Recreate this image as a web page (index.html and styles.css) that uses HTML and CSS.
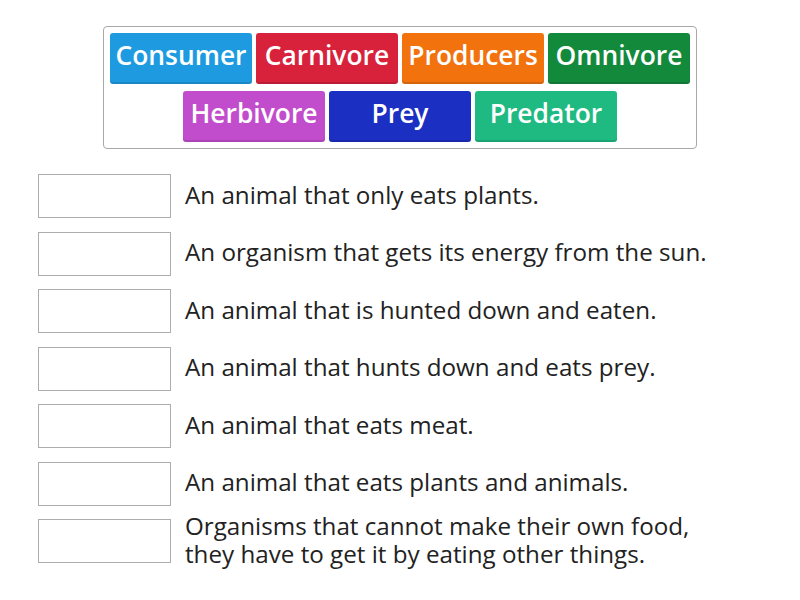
FILE: index.html
```html
<!DOCTYPE html>
<html>
<head>
<meta charset="utf-8">
<link rel="stylesheet" href="styles.css">
</head>
<body>
<div class="page">
  <div class="bank">
    <div class="bank-row">
      <div class="tile consumer">Consumer</div>
      <div class="tile carnivore">Carnivore</div>
      <div class="tile producers">Producers</div>
      <div class="tile omnivore">Omnivore</div>
    </div>
    <div class="bank-row">
      <div class="tile herbivore">Herbivore</div>
      <div class="tile prey">Prey</div>
      <div class="tile predator">Predator</div>
    </div>
  </div>
  <div class="rows">
    <div class="row"><div class="slot"></div><div class="def">An animal that only eats plants.</div></div>
    <div class="row"><div class="slot"></div><div class="def">An organism that gets its energy from the sun.</div></div>
    <div class="row"><div class="slot"></div><div class="def">An animal that is hunted down and eaten.</div></div>
    <div class="row"><div class="slot"></div><div class="def">An animal that hunts down and eats prey.</div></div>
    <div class="row"><div class="slot"></div><div class="def">An animal that eats meat.</div></div>
    <div class="row"><div class="slot"></div><div class="def">An animal that eats plants and animals.</div></div>
    <div class="row"><div class="slot"></div><div class="def two">Organisms that cannot make their own food,<br>they have to get it by eating other things.</div></div>
  </div>
</div>
</body>
</html>
```
FILE: styles.css
```css
html, body {
  margin: 0;
  padding: 0;
  background: #fff;
}
body {
  font-family: "Open Sans", "Liberation Sans", sans-serif;
  color: #222;
  min-height: 600px;
}
.page {
  padding-top: 26px;
  padding-bottom: 40px;
}
.bank {
  width: 594px;
  box-sizing: border-box;
  margin: 0 auto;
  border: 1px solid #a8a8a8;
  border-radius: 4px;
  padding: 6px;
  display: flex;
  flex-direction: column;
  gap: 7px;
}
.bank-row {
  display: flex;
  justify-content: center;
  gap: 4px;
}
.tile {
  width: 142px;
  height: 51px;
  box-sizing: border-box;
  border-radius: 3px;
  color: #fff;
  font-weight: 600;
  font-size: 26.4px;
  display: flex;
  align-items: center;
  justify-content: center;
  padding-bottom: 8px;
  box-shadow: inset 0 -2px 0 rgba(0,0,0,0.12);
}
.consumer { background: #1e9be0; }
.carnivore { background: #d8223c; }
.producers { background: #f2720e; }
.omnivore { background: #13893c; }
.herbivore { background: #c24dcc; }
.prey { background: #1b2fc2; }
.predator { background: #1fba82; }

.rows {
  margin-top: 25px;
  padding-left: 38px;
  display: flex;
  flex-direction: column;
  gap: 13.5px;
}
.row {
  display: flex;
  align-items: center;
  gap: 14px;
}
.slot {
  width: 133px;
  height: 44px;
  box-sizing: border-box;
  border: 1px solid #adadad;
  flex: none;
}
.def {
  font-size: 24.2px;
  line-height: 28px;
  color: #222;
  padding-bottom: 3px;
}
.def.two {
  margin: -7.5px 0;
}
```
